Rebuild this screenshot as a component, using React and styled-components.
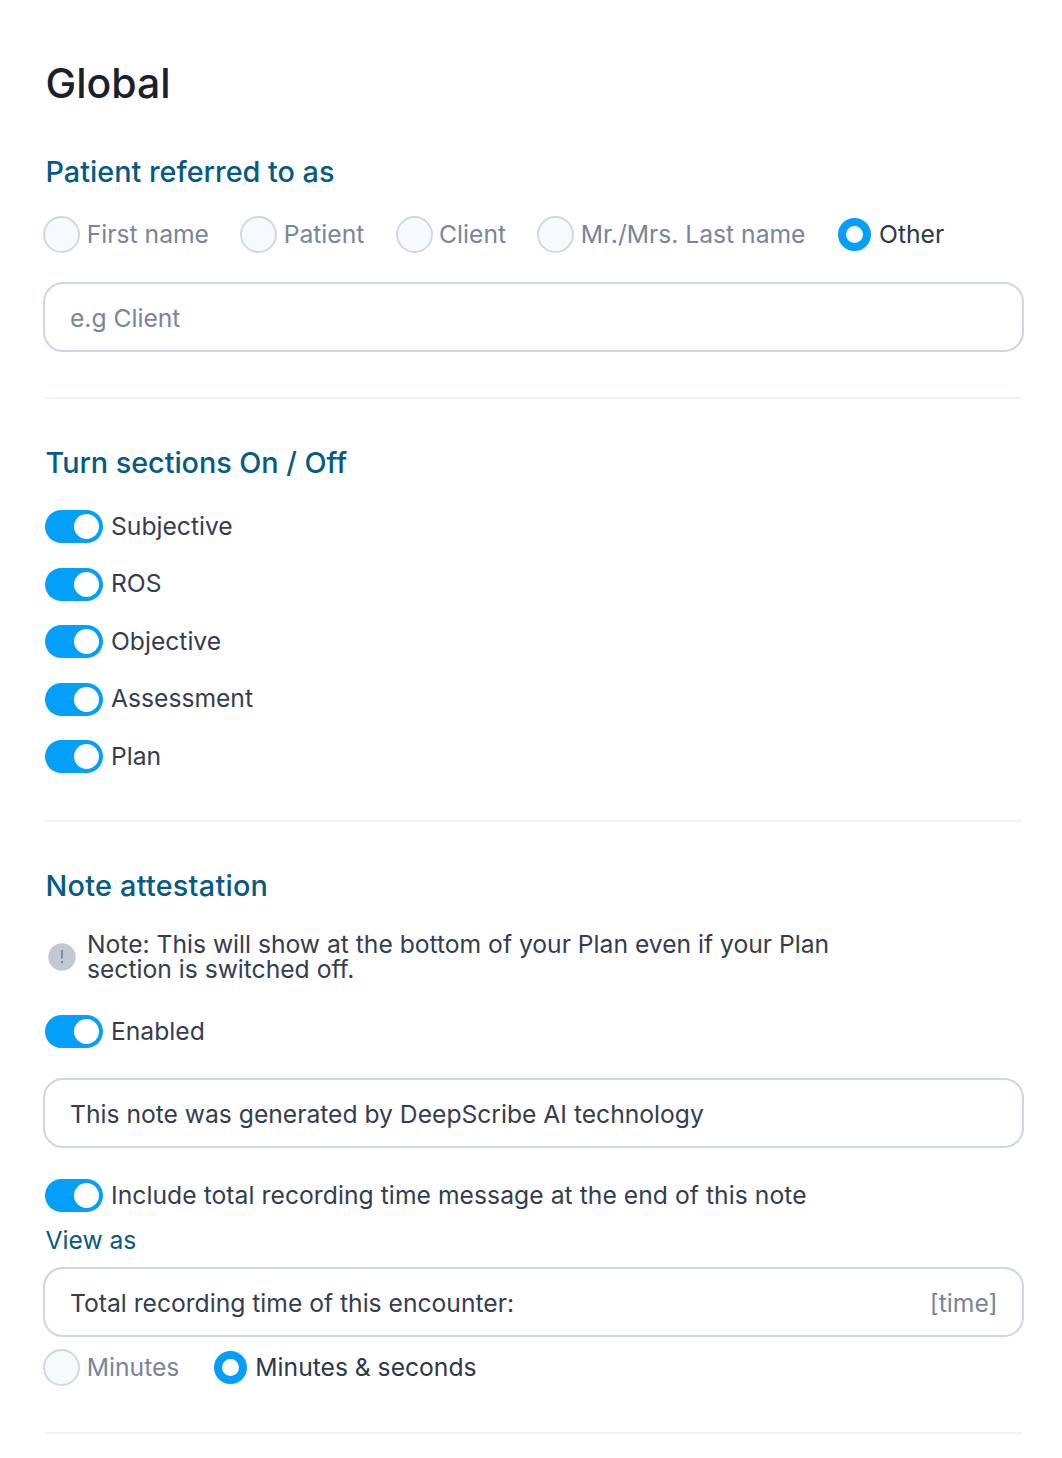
import React, { useState } from "react";
import styled, { createGlobalStyle } from "styled-components";

const GlobalStyle = createGlobalStyle`
  * {
    box-sizing: border-box;
  }
  body {
    margin: 0;
    background: #fff;
    font-family: Inter, sans-serif;
    color: #343d50;
  }
`;

const sections = ["Subjective", "ROS", "Objective", "Assessment", "Plan"];

const nameOptions = [
  { label: "First name", gap: 31.4 },
  { label: "Patient", gap: 31.4 },
  { label: "Client", gap: 31.4 },
  { label: "Mr./Mrs. Last name", gap: 32.6 },
  { label: "Other", gap: 0 },
];

const timeOptions = [
  { label: "Minutes", gap: 35 },
  { label: "Minutes & seconds", gap: 0 },
];

function RadioGroup({ name, options, initial }) {
  const [selected, setSelected] = useState(initial);

  return (
    <RadioRow>
      {options.map(({ label, gap }) => (
        <RadioLabel key={label} $checked={selected === label} $gap={gap}>
          <RadioInput
            type="radio"
            name={name}
            checked={selected === label}
            onChange={() => setSelected(label)}
          />
          <RadioText>{label}</RadioText>
        </RadioLabel>
      ))}
    </RadioRow>
  );
}

function Toggle({ label, spacing = 0 }) {
  const [on, setOn] = useState(true);

  return (
    <ToggleRow>
      <Switch
        type="button"
        role="switch"
        aria-checked={on}
        aria-label={label}
        $on={on}
        onClick={() => setOn(!on)}
      >
        <Knob />
      </Switch>
      <ToggleText $spacing={spacing}>{label}</ToggleText>
    </ToggleRow>
  );
}

export default function App() {
  return (
    <Page>
      <GlobalStyle />
      <Title>Global</Title>

      <Section $height={294} $top={48}>
        <Heading $bottom={25}>Patient referred to as</Heading>
        <RadioGroup name="referral" options={nameOptions} initial="Other" />
        <Field $top={29}>
          <Input placeholder="e.g Client" />
        </Field>
      </Section>

      <Section $height={423} $top={45}>
        <Heading $bottom={28} $spacing={-0.05}>
          Turn sections On / Off
        </Heading>
        <ToggleList>
          {sections.map((section) => (
            <Toggle key={section} label={section} />
          ))}
        </ToggleList>
      </Section>

      <Section $height={612} $top={45}>
        <Heading $bottom={27} $spacing={0.25}>
          Note attestation
        </Heading>
        <Note>
          <NoteIcon viewBox="0 0 28 28">
            <circle cx="14" cy="14" r="13.7" fill="#c3c8d4" />
            <path
              d="M14 7v8.5M14 18v2.3"
              stroke="#7d879b"
              strokeWidth="1.8"
            />
          </NoteIcon>
          <NoteText>
            Note: This will show at the bottom of your Plan even if your Plan
            <br />
            section is switched off.
          </NoteText>
        </Note>
        <Toggle label="Enabled" />
        <Field $top={30}>
          <Input defaultValue="This note was generated by DeepScribe AI technology" />
        </Field>
        <Recording>
          <Toggle
            label="Include total recording time message at the end of this note"
            spacing={0.06}
          />
          <ViewAs>View as</ViewAs>
          <Field $top={11}>
            <Input defaultValue="Total recording time of this encounter:" />
            <Suffix>[time]</Suffix>
          </Field>
          <TimeFormat>
            <RadioGroup
              name="format"
              options={timeOptions}
              initial="Minutes & seconds"
            />
          </TimeFormat>
        </Recording>
      </Section>
    </Page>
  );
}

const Page = styled.main`
  height: 1458px;
  padding: 56px 38px 0 45px;
  overflow: hidden;
  font-size: 24.65px;
`;

const Title = styled.h1`
  height: 49px;
  margin: 0;
  padding-left: 0.5px;
  color: #1a202c;
  font-size: 41px;
  font-weight: 500;
  line-height: 54px;
`;

const Section = styled.section`
  width: 977px;
  height: ${(props) => props.$height}px;
  padding-top: ${(props) => props.$top}px;
  border-bottom: 2px solid #ebf2f9;

  &:last-child {
    border-color: #f0f4f9;
  }
`;

const Heading = styled.h2`
  margin: 0 0 ${(props) => props.$bottom}px 0.5px;
  color: #065b83;
  font-size: 28.8px;
  font-weight: 500;
  line-height: 38px;
  letter-spacing: ${(props) => props.$spacing || 0}px;
`;

const RadioRow = styled.div`
  display: flex;
  align-items: center;
  height: 37px;
  margin-left: -1.6px;
`;

const RadioLabel = styled.label`
  display: flex;
  align-items: center;
  gap: ${(props) => (props.$checked ? 8 : 6.4)}px;
  margin-right: ${(props) => props.$gap}px;
  color: ${(props) => (props.$checked ? "#2d3748" : "#78859a")};
  white-space: nowrap;
`;

const RadioText = styled.span`
  padding-bottom: 2px;
`;

const RadioInput = styled.input`
  appearance: none;
  flex: none;
  width: 37px;
  height: 37px;
  margin: 0;
  border: 2px solid #d0d8e4;
  border-radius: 50%;
  background: #f7fafc;

  &:checked {
    width: 33px;
    height: 33px;
    border: 8px solid #049ff8;
    background: #fff;
  }
`;

const Field = styled.div`
  display: flex;
  align-items: center;
  width: 981px;
  height: 70px;
  margin: ${(props) => props.$top}px 0 0 -2px;
  padding: 1px 24.5px 0 25px;
  border: 2px solid #cdd6e2;
  border-radius: 20px;
`;

const Input = styled.input`
  flex: 1;
  min-width: 0;
  padding: 1px 0 0;
  border: 0;
  outline: 0;
  background: none;
  color: #343d50;
  font: inherit;

  &::placeholder {
    color: #78859a;
  }
`;

const Suffix = styled.span`
  color: #78859a;
`;

const ToggleList = styled.div`
  display: grid;
  gap: 24.5px;
`;

const ToggleRow = styled.div`
  display: flex;
  align-items: center;
  gap: 8px;
  height: 33px;
`;

const ToggleText = styled.span`
  padding-bottom: 2px;
  letter-spacing: ${(props) => props.$spacing}px;
`;

const Switch = styled.button`
  display: flex;
  justify-content: ${(props) => (props.$on ? "flex-end" : "flex-start")};
  align-items: center;
  flex: none;
  width: 58px;
  height: 33px;
  padding: 4px;
  border: 0;
  border-radius: 17px;
  background: ${(props) => (props.$on ? "#049ff8" : "#cbd5e0")};
`;

const Knob = styled.span`
  width: 25px;
  height: 25px;
  border-radius: 50%;
  background: #fff;
`;

const Note = styled.div`
  display: flex;
  align-items: center;
  gap: 11px;
  height: 50px;
  margin: 0 0 33px 3px;
`;

const NoteIcon = styled.svg`
  flex: none;
  width: 28px;
  height: 28px;
`;

const NoteText = styled.p`
  margin: 0;
  line-height: 25px;
`;

const Recording = styled.div`
  margin-top: 31px;
`;

const ViewAs = styled.div`
  margin: 12px 0 0 0.5px;
  color: #065b83;
  line-height: 32px;
`;

const TimeFormat = styled.div`
  margin-top: 12px;
`;
